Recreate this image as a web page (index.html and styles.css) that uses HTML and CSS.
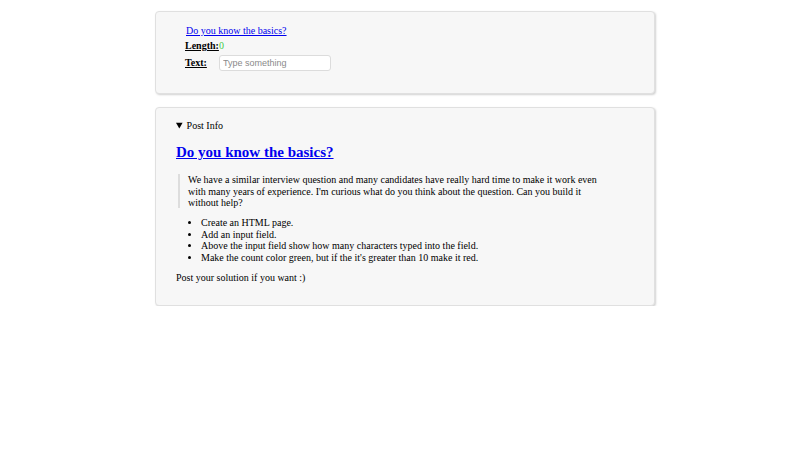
FILE: index.html
```html
<!DOCTYPE html>
<html>
<head>
<meta charset="utf-8">
<link rel="stylesheet" href="styles.css">
</head>
<body>
<div class="page">
  <section class="card">
    <div class="form">
      <a class="small-link" href="#">Do you know the basics?</a>
      <div class="row"><span class="label">Length:</span><span class="count">0</span></div>
      <div class="row"><span class="label">Text:</span><input class="field" type="text" placeholder="Type something"></div>
    </div>
  </section>
  <section class="card">
    <details open>
      <summary>Post Info</summary>
      <h2 class="title"><a href="#">Do you know the basics?</a></h2>
      <blockquote class="quote">We have a similar interview question and many candidates have really hard time to make it work even with many years of experience. I'm curious what do you think about the question. Can you build it without help?</blockquote>
      <ul class="steps">
        <li>Create an HTML page.</li>
        <li>Add an input field.</li>
        <li>Above the input field show how many characters typed into the field.</li>
        <li>Make the count color green, but if the it's greater than 10 make it red.</li>
      </ul>
      <p class="note">Post your solution if you want :)</p>
    </details>
  </section>
</div>
</body>
</html>
```
FILE: styles.css
```css
html, body {
  margin: 0;
  padding: 0;
  background: #fff;
}
body {
  font-family: "Liberation Serif", "Times New Roman", serif;
  font-size: 10px;
  line-height: 11.4px;
  color: #000;
}
.page {
  display: flex;
  flex-direction: column;
  align-items: flex-start;
  gap: 13px;
  padding: 11px 0 0 155px;
}
.card {
  box-sizing: border-box;
  width: 500px;
  background: #f7f7f7;
  border: 1px solid #e0e0e0;
  border-radius: 4px;
  box-shadow: 1px 1px 2px rgba(0,0,0,0.18);
  padding: 12px 20px 13px 20px;
}
.form {
  display: flex;
  flex-direction: column;
  align-items: flex-start;
  gap: 3.5px;
  margin: 1px 0 9px 9px;
}
a {
  color: #0000ee;
}
.small-link {
  margin-left: 1px;
}
.row {
  display: flex;
  align-items: center;
}
.label {
  display: inline-block;
  width: 34px;
  font-weight: bold;
  text-decoration: underline;
}
.count {
  color: #44cc44;
}
.field {
  box-sizing: border-box;
  width: 112px;
  height: 16px;
  margin: 0;
  padding: 0 3px;
  border: 1px solid #dcdcdc;
  border-radius: 3px;
  background: #fff;
  font-family: "Liberation Sans", Arial, sans-serif;
  font-size: 9px;
  outline: none;
}
.field::placeholder {
  color: #8a8a8a;
}
summary {
  cursor: pointer;
}
.title {
  font-size: 15px;
  line-height: 17px;
  margin: 13px 0 13px 0;
}
.quote {
  margin: 0 30px 0 2px;
  padding-left: 8px;
  border-left: 2px solid #ddd;
}
.steps {
  margin: 9px 0 9px 0;
  padding-left: 25px;
}
.note {
  margin: 9px 0 9px 0;
}
```
